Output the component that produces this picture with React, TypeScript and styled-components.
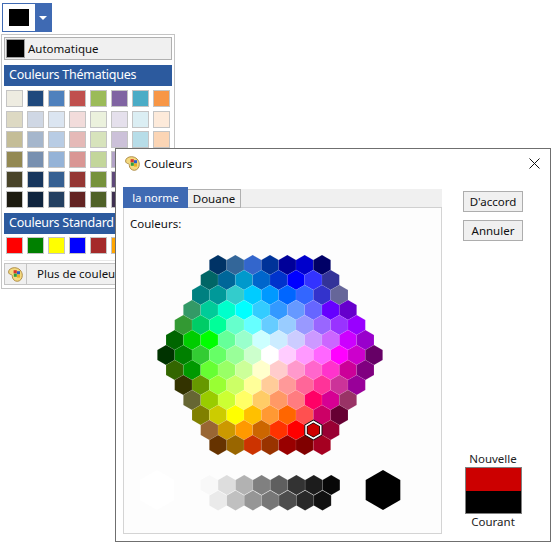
import React from 'react';
import styled, { createGlobalStyle } from 'styled-components';

const FONT = '"Noto Sans", "Open Sans", sans-serif';

const THEME_ROWS = [
  ['#eeece1', '#1f497d', '#4f81bd', '#c0504d', '#9bbb59', '#8064a2', '#4bacc6', '#f79646'],
  ['#ddd9c3', '#cfd7e4', '#dbe5f1', '#f2dcdb', '#ebf1dd', '#e5e0ec', '#dbeef3', '#fdeada'],
  ['#c4bd97', '#a5b6cc', '#b8cce4', '#e5b9b7', '#d7e3bc', '#ccc1d9', '#b7dde8', '#fbd5b5'],
  ['#938953', '#7890b0', '#95b3d7', '#d99694', '#c3d69b', '#b2a2c7', '#92cddc', '#fac08f'],
  ['#494429', '#17365d', '#366092', '#953734', '#76923c', '#5f497a', '#31859b', '#e36c09'],
  ['#1d1b10', '#0f243e', '#244061', '#632423', '#4f6128', '#3f3151', '#205867', '#974806'],
];
const STANDARD = ['#ff0000', '#008000', '#ffff00', '#0000ff', '#a52a2a', '#ffa500', '#808080', '#800080'];

const HEX_ROWS = [
  ['003366', '336699', '3366cc', '003399', '000099', '0000cc', '000066'],
  ['006666', '006699', '0099cc', '0066cc', '0033cc', '0000ff', '3333ff', '333399'],
  ['008080', '009999', '33cccc', '00ccff', '0099ff', '0066ff', '3366ff', '3333cc', '666699'],
  ['339966', '00cc99', '00ffcc', '00ffff', '33ccff', '3399ff', '6699ff', '6666ff', '6600ff', '6600cc'],
  ['339933', '00cc66', '00ff99', '66ffcc', '66ffff', '66ccff', '99ccff', '9999ff', '9966ff', '9933ff', '9900ff'],
  ['006600', '00cc00', '00ff00', '66ff99', '99ffcc', 'ccffff', 'ccecff', 'ccccff', 'cc99ff', 'cc66ff', 'cc00ff', '9900cc'],
  ['003300', '008000', '33cc33', '66ff66', '99ff99', 'ccffcc', 'ffffff', 'ffccff', 'ff99ff', 'ff66ff', 'ff00ff', 'cc00cc', '660066'],
  ['336600', '009900', '66ff33', '99ff66', 'ccff99', 'ffffcc', 'ffcccc', 'ff99cc', 'ff66cc', 'ff33cc', 'cc0099', '800080'],
  ['333300', '669900', '99ff33', 'ccff66', 'ffff99', 'ffcc99', 'ff9999', 'ff6699', 'ff3399', 'cc3399', '990099'],
  ['666633', '99cc00', 'ccff33', 'ffff66', 'ffcc66', 'ff9966', 'ff7c80', 'ff0066', 'd60093', '993366'],
  ['808000', 'cccc00', 'ffff00', 'ffc000', 'ff9933', 'ff6600', 'ff5050', 'cc0066', '660033'],
  ['996633', 'cc9900', 'ff9900', 'cc6600', 'ff3300', 'ff0000', 'cc0000', '990033'],
  ['663300', '996600', 'cc3300', '993300', '990000', '800000', 'a50021'],
];
const GREYS_TOP = ['f8f8f8', 'dddddd', 'b2b2b2', '808080', '5f5f5f', '333333', '1c1c1c', '080808'];
const GREYS_BOTTOM = ['eaeaea', 'c0c0c0', '969696', '777777', '4d4d4d', '292929', '111111'];

const PITCH = 17.33;
const CENTER_X = 146;

const hexPoints = (cx: number, cy: number, r: number) => {
  const w = r * 0.866;
  return [
    [cx, cy - r],
    [cx + w, cy - r / 2],
    [cx + w, cy + r / 2],
    [cx, cy + r],
    [cx - w, cy + r / 2],
    [cx - w, cy - r / 2],
  ]
    .map((p) => p.map((n) => n.toFixed(2)).join(','))
    .join(' ');
};

const GlobalStyle = createGlobalStyle`
  html, body {
    margin: 0;
    padding: 0;
    background: #fff;
  }
  body {
    font-family: ${FONT};
    font-size: 12px;
    color: #1a1a1a;
  }
`;

const Page = styled.div`
  position: relative;
  width: 552px;
  height: 542px;
  overflow: hidden;
  padding: 3px 0 0 1px;
  box-sizing: border-box;
`;

const PickerButton = styled.div`
  display: flex;
  width: 50px;
  height: 29px;
  margin-left: 1px;
  box-sizing: border-box;
  border: 1px solid #3f6ab3;
`;

const PickerFace = styled.div`
  flex: 1;
  display: flex;
  align-items: center;
  justify-content: center;
  background: #fff;
`;

const PickerSwatch = styled.div`
  width: 20px;
  height: 17px;
  background: #000;
`;

const PickerArrow = styled.div`
  width: 16px;
  display: flex;
  align-items: center;
  justify-content: center;
  background: #3f6ab3;
`;

const Caret = styled.div`
  width: 0;
  height: 0;
  border-left: 4px solid transparent;
  border-right: 4px solid transparent;
  border-top: 4px solid #fff;
`;

const Dropdown = styled.div`
  width: 174px;
  height: 255px;
  margin-top: 2px;
  padding: 2px;
  box-sizing: border-box;
  background: #fff;
  border: 1px solid #c4c4c4;
`;

const AutoButton = styled.div`
  display: flex;
  align-items: center;
  height: 23px;
  padding-left: 1px;
  box-sizing: border-box;
  background: #f0f0f0;
  border: 1px solid #b0b0b0;
  font-size: 11.5px;
  color: #111;
`;

const AutoSwatch = styled.div`
  width: 19px;
  height: 19px;
  margin-right: 3px;
  box-sizing: border-box;
  background: #000;
  border: 1px solid #a0a0a0;
`;

const SectionHeader = styled.div<{ $top: number }>`
  height: 21px;
  margin-top: ${(p) => p.$top}px;
  padding-left: 5px;
  line-height: 20px;
  font-size: 12.5px;
  letter-spacing: -0.25px;
  white-space: nowrap;
  color: #fff;
  background: #2c5a9e;
`;

const SwatchGrid = styled.div<{ $top: number }>`
  display: grid;
  grid-template-columns: repeat(8, 17px);
  column-gap: 4px;
  row-gap: 3px;
  margin: ${(p) => p.$top}px 0 0 2px;
`;

const Swatch = styled.div<{ $color: string; $gapBelow?: boolean }>`
  width: 17px;
  height: 17px;
  box-sizing: border-box;
  background: ${(p) => p.$color};
  border: 1px solid #c4c4c4;
  margin-bottom: ${(p) => (p.$gapBelow ? 1 : 0)}px;
`;

const Separator = styled.div`
  height: 1px;
  margin-top: 6px;
  background: #e8e8e8;
`;

const MoreButton = styled.div`
  display: flex;
  height: 22px;
  margin-top: 2px;
  box-sizing: border-box;
  background: #f0f0f0;
  border: 1px solid #c4c4c4;
  font-size: 11.5px;
  color: #111;
`;

const MoreIcon = styled.div`
  width: 21px;
  display: flex;
  align-items: center;
  justify-content: center;
  border-right: 1px solid #c4c4c4;
`;

const MoreLabel = styled.div`
  padding-left: 10px;
  line-height: 20px;
  white-space: nowrap;
`;

const Dialog = styled.div`
  position: absolute;
  left: 115px;
  top: 148px;
  width: 436px;
  height: 394px;
  box-sizing: border-box;
  display: flex;
  flex-direction: column;
  background: #fff;
  border: 1px solid #6f6f6f;
`;

const TitleBar = styled.div`
  display: flex;
  align-items: center;
  height: 29px;
  padding: 0 10px 0 9px;
  flex: none;
`;

const Title = styled.div`
  flex: 1;
  margin-left: 4px;
  font-size: 11.5px;
  color: #111;
`;

const DialogBody = styled.div`
  flex: 1;
  display: flex;
  padding: 9px 0 7px 7px;
  min-height: 0;
`;

const TabColumn = styled.div`
  width: 319px;
  display: flex;
  flex-direction: column;
`;

const TabStrip = styled.div`
  display: flex;
  align-items: flex-end;
  height: 21px;
  flex: none;
`;

const TabStripFill = styled.div`
  flex: 1;
  height: 19px;
  background: #f0f0f0;
  border-bottom: 1px solid #d0d0d0;
  box-sizing: border-box;
`;

const ActiveTab = styled.div`
  width: 65px;
  height: 21px;
  line-height: 21px;
  text-align: center;
  font-size: 11px;
  color: #fff;
  background: #3f6ab3;
`;

const Tab = styled.div`
  width: 53px;
  height: 19px;
  line-height: 18px;
  box-sizing: border-box;
  text-align: center;
  font-size: 11.5px;
  color: #111;
  background: #f0f0f0;
  border: 1px solid #b0b0b0;
  border-left: none;
`;

const TabPage = styled.div`
  flex: 1;
  box-sizing: border-box;
  padding: 8px 0 0 6px;
  background: #fdfdfd;
  border: 1px solid #d4d4d4;
  border-top: none;
`;

const PageLabel = styled.div`
  height: 20px;
  font-size: 11.5px;
  color: #111;
`;

const Wheel = styled.svg`
  display: block;
  margin: 12px 0 0 -6px;
`;

const SideColumn = styled.div`
  flex: 1;
  display: flex;
  flex-direction: column;
  align-items: center;
  padding: 4px 27px 4px 21px;
`;

const DialogButton = styled.div`
  width: 60px;
  height: 21px;
  line-height: 19px;
  box-sizing: border-box;
  margin-bottom: 8px;
  text-align: center;
  font-size: 11.5px;
  color: #111;
  background: #f0f0f0;
  border: 1px solid #adadad;
`;

const PreviewBlock = styled.div`
  margin-top: auto;
  display: flex;
  flex-direction: column;
  align-items: center;
  font-size: 11.5px;
  line-height: 16px;
  color: #222;
`;

const PreviewBox = styled.div`
  width: 57px;
  height: 47px;
  box-sizing: border-box;
  border: 1px solid #808080;
  display: flex;
  flex-direction: column;
`;

const PreviewPart = styled.div<{ $color: string }>`
  flex: 1;
  background: ${(p) => p.$color};
`;

const PaletteIcon = () => (
  <svg width="15" height="15" viewBox="0 0 15 15">
    <path
      d="M6.5.7C3 .7.6 2.6.6 5c0 2 1.6 2.4 2.6 2.6.9.2 1.1.8 1.1 1.7 0 2.6 2.1 5 5 5 2.900 0 5-2.600 5-6 0-4-3.400-7.600-7.800-7.600z"
      fill="#f4d97f"
      stroke="#a8843c"
      strokeWidth="0.9"
    />
    <rect x="5.600" y="3.200" width="3.200" height="3.200" fill="#d8342c" />
    <rect x="9" y="4.200" width="3" height="3.200" fill="#2c5fc9" />
    <rect x="5.800" y="6.600" width="3" height="3.200" fill="#2f9e3f" />
    <rect x="9" y="7.600" width="3" height="3" fill="#e8b020" />
  </svg>
);

const CloseIcon = () => (
  <svg width="11" height="11" viewBox="0 0 11 11">
    <path d="M.5.5l10 10M10.500.5l-10 10" stroke="#111" strokeWidth="1" fill="none" />
  </svg>
);

const HexWheel = () => (
  <Wheel width="317" height="280" viewBox="0 0 317 280">
    {HEX_ROWS.map((row, r) =>
      row.map((color, i) => (
        <polygon
          key={`${r}-${i}`}
          points={hexPoints(CENTER_X + (i - (row.length - 1) / 2) * PITCH, 17 + r * 15, 10)}
          fill={`#${color}`}
          stroke="rgba(255,255,255,0.15)"
          strokeWidth="0.5"
        />
      )),
    )}
    <polygon points={hexPoints(189.4, 182, 10.4)} fill="#000" />
    <polygon points={hexPoints(189.4, 182, 9.4)} fill="#fff" />
    <polygon points={hexPoints(189.4, 182, 7.6)} fill="#000" />
    <polygon points={hexPoints(189.4, 182, 6.8)} fill="#cc0000" />

    <polygon points={hexPoints(33, 242, 20)} fill="#ffffff" />
    {GREYS_TOP.map((color, i) => (
      <polygon
        key={color}
        points={hexPoints(85.4 + i * 17.4, 237, 10)}
        fill={`#${color}`}
        stroke="rgba(255,255,255,0.15)"
        strokeWidth="0.5"
      />
    ))}
    {GREYS_BOTTOM.map((color, i) => (
      <polygon
        key={color}
        points={hexPoints(94.1 + i * 17.4, 252.5, 10)}
        fill={`#${color}`}
        stroke="rgba(255,255,255,0.15)"
        strokeWidth="0.5"
      />
    ))}
    <polygon points={hexPoints(259, 242, 20)} fill="#000" />
  </Wheel>
);

export default function App() {
  return (
    <Page>
      <GlobalStyle />
      <PickerButton>
        <PickerFace>
          <PickerSwatch />
        </PickerFace>
        <PickerArrow>
          <Caret />
        </PickerArrow>
      </PickerButton>

      <Dropdown>
        <AutoButton>
          <AutoSwatch />
          Automatique
        </AutoButton>
        <SectionHeader $top={5}>Couleurs Thématiques</SectionHeader>
        <SwatchGrid $top={4}>
          {THEME_ROWS.flatMap((row, r) =>
            row.map((color, i) => <Swatch key={`${r}-${i}`} $color={color} $gapBelow={r === 0} />),
          )}
        </SwatchGrid>
        <SectionHeader $top={5}>Couleurs Standard</SectionHeader>
        <SwatchGrid $top={3}>
          {STANDARD.map((color) => (
            <Swatch key={color} $color={color} />
          ))}
        </SwatchGrid>
        <Separator />
        <MoreButton>
          <MoreIcon>
            <PaletteIcon />
          </MoreIcon>
          <MoreLabel>Plus de couleurs...</MoreLabel>
        </MoreButton>
      </Dropdown>

      <Dialog>
        <TitleBar>
          <PaletteIcon />
          <Title>Couleurs</Title>
          <CloseIcon />
        </TitleBar>
        <DialogBody>
          <TabColumn>
            <TabStrip>
              <ActiveTab>la norme</ActiveTab>
              <Tab>Douane</Tab>
              <TabStripFill />
            </TabStrip>
            <TabPage>
              <PageLabel>Couleurs:</PageLabel>
              <HexWheel />
            </TabPage>
          </TabColumn>
          <SideColumn>
            <DialogButton>D'accord</DialogButton>
            <DialogButton>Annuler</DialogButton>
            <PreviewBlock>
              Nouvelle
              <PreviewBox>
                <PreviewPart $color="#cc0000" />
                <PreviewPart $color="#000000" />
              </PreviewBox>
              Courant
            </PreviewBlock>
          </SideColumn>
        </DialogBody>
      </Dialog>
    </Page>
  );
}
